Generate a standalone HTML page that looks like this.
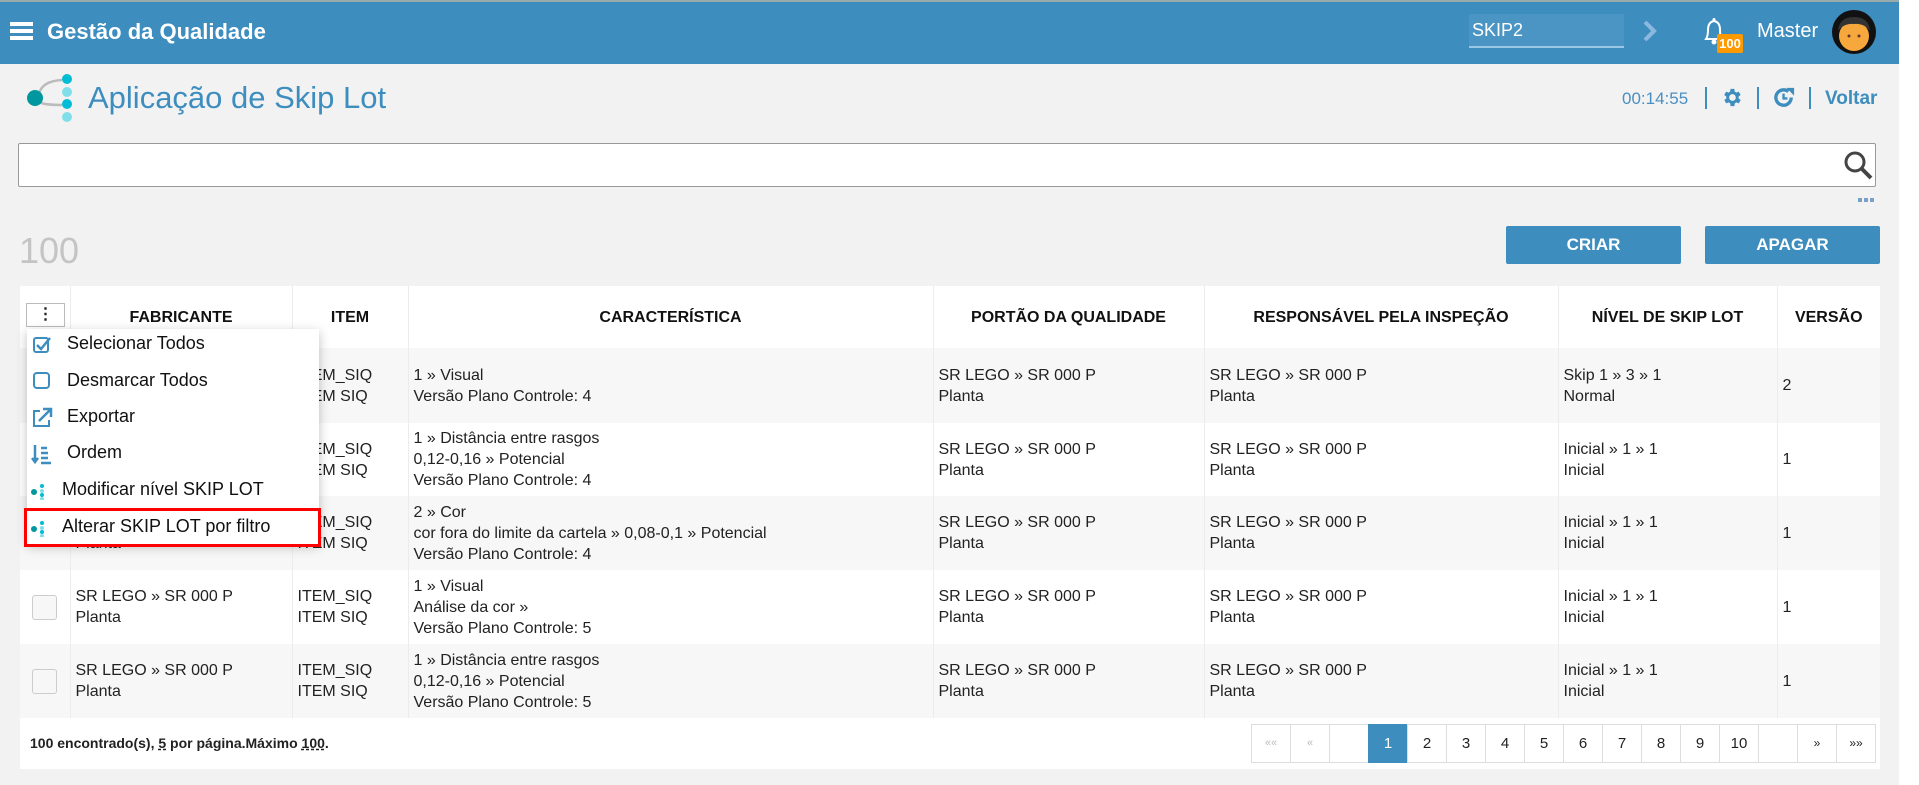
<!DOCTYPE html>
<html><head><meta charset="utf-8">
<style>
*{box-sizing:border-box;margin:0;padding:0}
body{width:1919px;height:785px;background:#fff;font-family:"Liberation Sans",sans-serif;position:relative;overflow:hidden;color:#222}
.abs{position:absolute}
#page{position:absolute;left:0;top:0;width:1899px;height:785px;background:#f2f2f2}
#hdr{position:absolute;left:0;top:0;width:1899px;height:64px;background:#3d8dbf;border-top:2px solid #9aa}
table{position:absolute;left:20px;top:286px;border-collapse:collapse;table-layout:fixed;width:1860px}
td,th{border-left:1px solid #ececec;font-size:16px;line-height:21px;padding:0 5px;vertical-align:middle;text-align:left;font-weight:normal}
th{font-weight:bold;text-align:center;font-size:16px;height:62px;background:#fff;color:#111}
tr.g td{background:#f7f7f7}
tr.w td{background:#fff}
tr td:first-child,tr th:first-child{border-left:none}
.cb{width:25px;height:25px;border:1px solid #ccc;border-radius:3px;background:#f7f7f7;margin-left:7px}
.btn{position:absolute;top:226px;height:38px;width:175px;background:#3d8dbf;color:#fff;font-weight:bold;font-size:17px;text-align:center;line-height:38px;border-radius:2px}
#menu{position:absolute;left:27px;top:329px;width:292px;height:215px;background:#fff;box-shadow:0 3px 10px rgba(0,0,0,.25)}
.mi{position:absolute;left:40px;font-size:18px;color:#111}
.pg{position:absolute;top:724px;left:1252px;display:flex}
.pg div{width:40px;height:39px;border:1px solid #ddd;margin-left:-1px;background:#fff;text-align:center;line-height:37px;font-size:15px;color:#222}
</style></head><body>
<div id="page"></div>
<div id="hdr">
 <div class="abs" style="left:10px;top:20px;width:23px;height:4px;background:#fff;box-shadow:0 7px 0 #fff,0 14px 0 #fff"></div>
 <div class="abs" style="left:47px;top:17px;color:#fff;font-weight:bold;font-size:22px">Gestão da Qualidade</div>
 <div class="abs" style="left:1469px;top:12px;width:155px;height:34px;background:#4b95c4;border-bottom:2px solid #9cc6e6;color:#fff;font-size:18px;line-height:32px;padding-left:3px">SKIP2</div>
 <svg class="abs" style="left:1642px;top:18px" width="16" height="22"><path d="M3 2 L12 11 L3 20" stroke="#8cb8e0" stroke-width="4" fill="none"/></svg>
 <svg class="abs" style="left:1702px;top:15px" width="24" height="28"><path d="M4 22 Q6 19 6 13 Q6 5 12 4 Q18 5 18 13 Q18 19 20 22 Z" stroke="#fff" stroke-width="2" fill="none"/><circle cx="12" cy="2.5" r="1.5" fill="#fff"/><circle cx="12" cy="25" r="2.5" fill="#fff"/></svg>
 <div class="abs" style="left:1717px;top:32px;width:26px;height:19px;background:#f90;border-radius:2px;color:#fff;font-size:13px;font-weight:bold;text-align:center;line-height:19px">100</div>
 <div class="abs" style="left:1757px;top:18px;color:#fff;font-size:20px">Master</div>
 <svg class="abs" style="left:1831px;top:7px" width="46" height="46"><circle cx="23" cy="23" r="22" fill="#111"/><ellipse cx="23" cy="27" rx="15" ry="15" fill="#f7a83c"/><path d="M7 22 Q8 8 23 8 Q38 8 39 22 Q33 14 23 15 Q13 14 7 22Z" fill="#333"/><circle cx="18" cy="27" r="1.5" fill="#633"/><circle cx="28" cy="27" r="1.5" fill="#633"/></svg>
</div>
<svg class="abs" style="left:24px;top:72px" width="50" height="56"><path d="M15 22 Q18 9 38 8" stroke="#bbb" stroke-width="2.5" fill="none"/><path d="M15 30 Q20 33 38 33" stroke="#bbb" stroke-width="2.5" fill="none"/><circle cx="11" cy="26" r="8" fill="#00979f"/><circle cx="43" cy="7" r="5" fill="#00bcd4"/><circle cx="43" cy="20" r="5" fill="#80deea"/><circle cx="43" cy="32" r="5" fill="#00bcd4"/><circle cx="43" cy="45" r="5" fill="#80deea"/></svg>
<div class="abs" style="left:88px;top:80px;font-size:31px;color:#3d8dbf">Aplicação de Skip Lot</div>
<div class="abs" style="left:1622px;top:89px;font-size:17px;color:#4a8fc3">00:14:55</div>
<div class="abs" style="left:1705px;top:87px;width:2px;height:22px;background:#3d8dbf"></div>
<svg class="abs" style="left:1720px;top:86px" width="23" height="23" viewBox="0 0 24 24"><path fill="#3d8dbf" d="M19.4 13a7.8 7.8 0 0 0 0-2l2.1-1.6-2-3.5-2.5 1a7.5 7.5 0 0 0-1.7-1L15 3h-4l-.4 2.9a7.5 7.5 0 0 0-1.7 1l-2.5-1-2 3.5L6.6 11a7.8 7.8 0 0 0 0 2l-2.1 1.6 2 3.5 2.5-1a7.5 7.5 0 0 0 1.7 1L11 21h4l.4-2.9a7.5 7.5 0 0 0 1.7-1l2.5 1 2-3.5zM13 15.5a3.5 3.5 0 1 1 0-7 3.5 3.5 0 0 1 0 7z"/></svg>
<div class="abs" style="left:1757px;top:87px;width:2px;height:22px;background:#3d8dbf"></div>
<svg class="abs" style="left:1773px;top:86px" width="23" height="23" viewBox="0 0 24 24"><path d="M19 12a8 8 0 1 1-3-6.2" stroke="#3d8dbf" stroke-width="3.5" fill="none"/><path d="M14 2h8v8z" fill="#3d8dbf"/><path d="M11 8v5h4" stroke="#3d8dbf" stroke-width="2.5" fill="none"/></svg>
<div class="abs" style="left:1809px;top:87px;width:2px;height:22px;background:#3d8dbf"></div>
<div class="abs" style="left:1825px;top:88px;font-size:19px;font-weight:bold;color:#3d8dbf">Voltar</div>
<div class="abs" style="left:18px;top:143px;width:1858px;height:44px;background:#fff;border:1px solid #999;border-radius:2px"></div>
<svg class="abs" style="left:1843px;top:150px" width="32" height="32"><circle cx="12" cy="12" r="9" stroke="#444" stroke-width="3" fill="none"/><path d="M19 19 L28 28" stroke="#444" stroke-width="4"/></svg>
<div class="abs" style="left:1858px;top:198px;width:16px;height:4px;background:repeating-linear-gradient(90deg,#7aa0c8 0 4px,transparent 4px 6px)"></div>
<div class="abs" style="left:19px;top:230px;font-size:36px;color:#c4c4c4">100</div>
<div class="btn" style="left:1506px">CRIAR</div>
<div class="btn" style="left:1705px">APAGAR</div>
<table>
<colgroup><col style="width:50px"><col style="width:222px"><col style="width:116px"><col style="width:525px"><col style="width:271px"><col style="width:354px"><col style="width:219px"><col style="width:103px"></colgroup>
<tr><th></th><th>FABRICANTE</th><th>ITEM</th><th>CARACTERÍSTICA</th><th>PORTÃO DA QUALIDADE</th><th>RESPONSÁVEL PELA INSPEÇÃO</th><th>NÍVEL DE SKIP LOT</th><th>VERSÃO</th></tr>
<tr class="g" style="height:75px"><td></td><td>SR LEGO » SR 000 P<br>Planta</td><td>ITEM_SIQ<br>ITEM SIQ</td><td>1 » Visual<br>Versão Plano Controle: 4</td><td>SR LEGO » SR 000 P<br>Planta</td><td>SR LEGO » SR 000 P<br>Planta</td><td>Skip 1 » 3 » 1<br>Normal</td><td>2</td></tr>
<tr class="w" style="height:73px"><td></td><td>SR LEGO » SR 000 P<br>Planta</td><td>ITEM_SIQ<br>ITEM SIQ</td><td>1 » Distância entre rasgos<br>0,12-0,16 » Potencial<br>Versão Plano Controle: 4</td><td>SR LEGO » SR 000 P<br>Planta</td><td>SR LEGO » SR 000 P<br>Planta</td><td>Inicial » 1 » 1<br>Inicial</td><td>1</td></tr>
<tr class="g" style="height:74px"><td></td><td>SR LEGO » SR 000 P<br>Planta</td><td>ITEM_SIQ<br>ITEM SIQ</td><td>2 » Cor<br>cor fora do limite da cartela » 0,08-0,1 » Potencial<br>Versão Plano Controle: 4</td><td>SR LEGO » SR 000 P<br>Planta</td><td>SR LEGO » SR 000 P<br>Planta</td><td>Inicial » 1 » 1<br>Inicial</td><td>1</td></tr>
<tr class="w" style="height:74px"><td><div class="cb"></div></td><td>SR LEGO » SR 000 P<br>Planta</td><td>ITEM_SIQ<br>ITEM SIQ</td><td>1 » Visual<br>Análise da cor »<br>Versão Plano Controle: 5</td><td>SR LEGO » SR 000 P<br>Planta</td><td>SR LEGO » SR 000 P<br>Planta</td><td>Inicial » 1 » 1<br>Inicial</td><td>1</td></tr>
<tr class="g" style="height:74px"><td><div class="cb"></div></td><td>SR LEGO » SR 000 P<br>Planta</td><td>ITEM_SIQ<br>ITEM SIQ</td><td>1 » Distância entre rasgos<br>0,12-0,16 » Potencial<br>Versão Plano Controle: 5</td><td>SR LEGO » SR 000 P<br>Planta</td><td>SR LEGO » SR 000 P<br>Planta</td><td>Inicial » 1 » 1<br>Inicial</td><td>1</td></tr>
<tr class="w" style="height:51px"><td colspan="8" style="font-size:14px;font-weight:bold;padding-left:10px">100 encontrado(s), <u style="text-decoration-style:dashed">5</u> por página.Máximo <u style="text-decoration-style:dashed">100</u>.</td></tr>
</table>
<div class="abs" style="left:26px;top:303px;width:39px;height:24px;border:1px solid #bbb;background:#fff;text-align:center;line-height:22px;font-weight:bold;font-size:16px">&#8942;</div>
<div id="menu">
 <svg class="abs" style="left:5px;top:6px" width="20" height="20"><rect x="2" y="3" width="14" height="14" rx="2" stroke="#3d8dbf" stroke-width="2" fill="none"/><path d="M5 10 L9 14 L18 3" stroke="#3d8dbf" stroke-width="2.5" fill="none"/></svg>
 <div class="mi" style="top:4px">Selecionar Todos</div>
 <svg class="abs" style="left:5px;top:42px" width="20" height="20"><rect x="2" y="2" width="15" height="15" rx="3" stroke="#3d8dbf" stroke-width="2" fill="none"/></svg>
 <div class="mi" style="top:41px">Desmarcar Todos</div>
 <svg class="abs" style="left:4px;top:78px" width="22" height="22"><path d="M9 4H3v15h15v-6" stroke="#3d8dbf" stroke-width="2" fill="none"/><path d="M8 14 L19 3 M12 2h8v8" stroke="#3d8dbf" stroke-width="2.5" fill="none"/></svg>
 <div class="mi" style="top:77px">Exportar</div>
 <svg class="abs" style="left:4px;top:114px" width="22" height="22"><path d="M4 2v17 M1 15l3 4 3-4" stroke="#3d8dbf" stroke-width="2.5" fill="none"/><path d="M10 5h6 M10 10h7 M10 15h7 M10 20h10" stroke="#3d8dbf" stroke-width="2.5"/></svg>
 <div class="mi" style="top:113px">Ordem</div>
 <svg class="abs" style="left:3px;top:155px" width="16" height="16"><circle cx="4" cy="8" r="3" fill="#00979f"/><circle cx="12" cy="2" r="2" fill="#00bcd4"/><circle cx="12" cy="7" r="2" fill="#80deea"/><circle cx="12" cy="11" r="2" fill="#00bcd4"/><circle cx="12" cy="15" r="2" fill="#80deea"/></svg>
 <div class="mi" style="top:150px;left:35px">Modificar nível SKIP LOT</div>
 <svg class="abs" style="left:3px;top:192px" width="16" height="16"><circle cx="4" cy="8" r="3" fill="#00979f"/><circle cx="12" cy="2" r="2" fill="#00bcd4"/><circle cx="12" cy="7" r="2" fill="#80deea"/><circle cx="12" cy="11" r="2" fill="#00bcd4"/><circle cx="12" cy="15" r="2" fill="#80deea"/></svg>
 <div class="mi" style="top:187px;left:35px">Alterar SKIP LOT por filtro</div>
</div>
<div class="abs" style="left:24px;top:508px;width:297px;height:39px;border:3px solid #f00"></div>
<div class="pg"><div style="color:#bbb;font-size:11px">««</div><div style="color:#bbb;font-size:11px">«</div><div></div><div style="background:#3d8dbf;color:#fff;border-color:#3d8dbf">1</div><div>2</div><div>3</div><div>4</div><div>5</div><div>6</div><div>7</div><div>8</div><div>9</div><div>10</div><div></div><div style="font-size:12px">»</div><div style="font-size:12px">»»</div></div>
</body></html>
